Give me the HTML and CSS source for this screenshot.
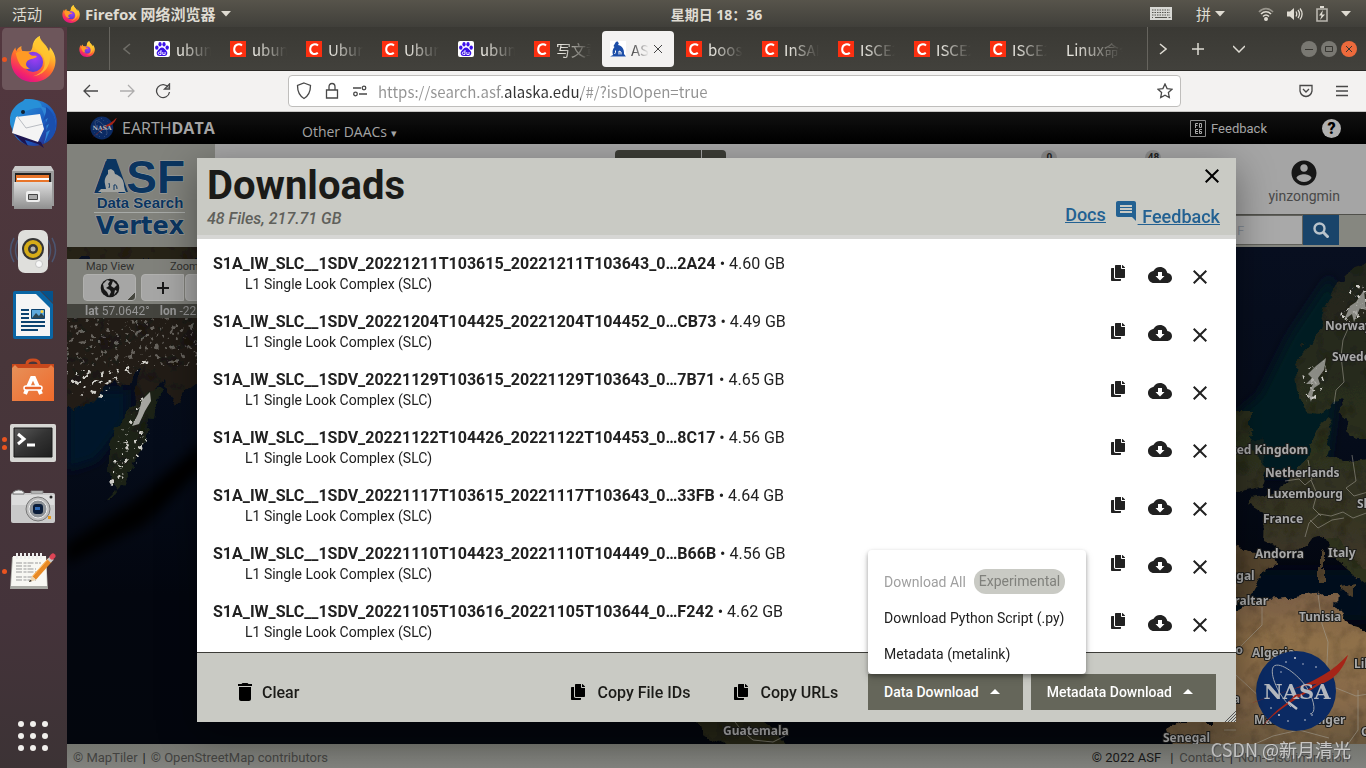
FILE: index.html
```html
<!DOCTYPE html>
<html lang="zh-CN">
<head>
<meta charset="utf-8">
<title>ASF Data Search Vertex</title>
<link rel="stylesheet" href="styles.css">
</head>
<body>
<svg class="defs" aria-hidden="true">
  <defs>
    <linearGradient id="ffg" x1="0.8" y1="0" x2="0.3" y2="1"><stop offset="0" stop-color="#fff44f"/><stop offset=".35" stop-color="#ffb62b"/><stop offset=".6" stop-color="#ff6a2d"/><stop offset=".85" stop-color="#f5256a"/><stop offset="1" stop-color="#d8128a"/></linearGradient>
    <radialGradient id="ffp" cx=".6" cy=".3" r=".8"><stop offset="0" stop-color="#a43df5"/><stop offset="1" stop-color="#4b3ccf"/></radialGradient>
    <linearGradient id="tbg" x1="0" y1="0" x2="1" y2="1"><stop offset="0" stop-color="#2f9fe0"/><stop offset=".6" stop-color="#1c5cc0"/><stop offset="1" stop-color="#2b1d78"/></linearGradient>
    <linearGradient id="metal" x1="0" y1="0" x2="0" y2="1"><stop offset="0" stop-color="#dedede"/><stop offset="1" stop-color="#8f8f8f"/></linearGradient>
    <linearGradient id="bag" x1="0" y1="0" x2="1" y2="1"><stop offset="0" stop-color="#e6915a"/><stop offset="1" stop-color="#f06a2b"/></linearGradient>
    <linearGradient id="screen" x1="0" y1="0" x2="1" y2="1"><stop offset="0" stop-color="#5a5a5a"/><stop offset=".5" stop-color="#333"/><stop offset="1" stop-color="#1d1d1d"/></linearGradient>
  </defs>
  <symbol id="firefox" viewBox="0 0 48 48">
    <path fill="url(#ffg)" d="M24 48C10 48 1 37.500 1 25.500c0-6 2-9.500 4.500-13.500l1 4c1-2.500 3-4.500 5.500-5.500-.5 2 0 4 1 5.500l8 0c3-3 2-4.500 3-8 1-3.500 4-6.500 7-8 0 4 2 6 5 9s3.500 4 4.500 7c1-1.500 1-3 1-4.500 3.500 4 6 9 6 14C47.500 39 37 48 24 48z"/>
    <circle cx="24" cy="27" r="10.500" fill="url(#ffp)"/>
    <path fill="#ff9a24" d="M6 18c4-4 12-3 16 2 2 1 5 0 6 1-1 3-7 2-10 5-3 4 0 7 3 8-6 2-12-2-15-16z"/>
    <path fill="#ffc52e" d="M31 0c0 6 9 8 10.500 20C43 31 35 41 24 42c9-3 13-8 12-16-1-9-9-11-11-15 0-4 2-8 6-11z" opacity=".8"/>
  </symbol>
  <symbol id="copy" viewBox="0 0 448 512"><path d="M320 448v40c0 13.255-10.745 24-24 24H24c-13.255 0-24-10.745-24-24V120c0-13.255 10.745-24 24-24h72v296c0 30.879 25.121 56 56 56h168zm0-344V0H152c-13.255 0-24 10.745-24 24v368c0 13.255 10.745 24 24 24h272c13.255 0 24-10.745 24-24V128H344c-13.200 0-24-10.800-24-24zm120.971-31.029L375.029 7.029A24 24 0 0 0 358.059 0H352v96h96v-6.059a24 24 0 0 0-7.029-16.970z"/></symbol>
  <symbol id="cloud" viewBox="0 0 24 24"><path d="M19.350 10.040C18.670 6.590 15.640 4 12 4 9.110 4 6.600 5.640 5.350 8.040 2.340 8.360 0 10.910 0 14c0 3.310 2.690 6 6 6h13c2.760 0 5-2.240 5-5 0-2.640-2.050-4.780-4.650-4.960zM16.500 13l-4.500 4.500-4.500-4.500h2.500V9h4v4h2.500z"/></symbol>
  <symbol id="close" viewBox="0 0 24 24"><path d="M19 6.410L17.590 5 12 10.590 6.410 5 5 6.410 10.590 12 5 17.590 6.410 19 12 13.410 17.590 19 19 17.590 13.410 12z"/></symbol>
  <symbol id="trash" viewBox="0 0 24 24"><path d="M6 19c0 1.100.9 2 2 2h8c1.100 0 2-.9 2-2V7H6v12zM19 4h-3.500l-1-1h-5l-1 1H5v2h14V4z"/></symbol>
  <symbol id="chat" viewBox="0 0 24 24"><path d="M21.990 4c0-1.100-.89-2-1.990-2H4c-1.100 0-2 .9-2 2v12c0 1.100.9 2 2 2h14l4 4-.010-18zM18 14H6v-2h12v2zm0-3H6V9h12v2zm0-3H6V6h12v2z"/></symbol>
  <symbol id="person" viewBox="0 0 24 24"><path d="M12 2C6.480 2 2 6.480 2 12s4.480 10 10 10 10-4.480 10-10S17.520 2 12 2zm0 3c1.660 0 3 1.340 3 3s-1.340 3-3 3-3-1.340-3-3 1.340-3 3-3zm0 14.200c-2.500 0-4.710-1.280-6-3.220.03-1.990 4-3.080 6-3.080 1.990 0 5.970 1.090 6 3.080-1.290 1.940-3.500 3.220-6 3.220z"/></symbol>
  <symbol id="caret" viewBox="0 0 10 6"><path d="M0 0h10L5 5.500z"/></symbol>
  <symbol id="up" viewBox="0 0 10 5"><path d="M0 5h10L5 0z"/></symbol>
  <symbol id="csdn" viewBox="0 0 16 16"><path fill="#fc2f10" d="M0 0h16v16H0z"/><path fill="none" stroke="#fff" stroke-width="2" d="M12 4.500C10 2.700 4.500 2.500 4.200 8s5 6 7.600 3.700"/></symbol>
  <symbol id="baidu" viewBox="0 0 16 16"><rect width="16" height="16" rx="2" fill="#fff"/><g fill="#3b10e8"><ellipse cx="2.800" cy="6.600" rx="1.700" ry="2.200"/><ellipse cx="6" cy="3.300" rx="1.600" ry="2.200"/><ellipse cx="10" cy="3.300" rx="1.600" ry="2.200"/><ellipse cx="13.200" cy="6.600" rx="1.700" ry="2.200"/><path d="M8 6.500c2 0 3 2 4.500 3.500s1 5-2 5H5.500c-3 0-3.500-3.500-2-5S6 6.500 8 6.500z"/></g><path fill="none" stroke="#fff" stroke-width=".9" d="M7 9v4.500H5.300c-1.300 0-1.300-2.500 0-2.500H7M8.800 11v2.500h2.300V11"/></symbol>
  <symbol id="asf" viewBox="0 0 16 16"><path fill="#fff" d="M0 0h16v16H0z"/><path fill="#1c4ea8" d="M3.500 5L6 .8 7.800.5l1 2L8 4c3 .5 6.500 3 6 9l2 2.500H0L3 14C2 11 2.500 8 4.500 6z"/><path stroke="#fff" fill="none" d="M5.500 9.500q.5 2-1 3.500M9 13.500v-3.500l2 1v2.500"/></symbol>
  <symbol id="nasa" viewBox="0 0 98 82">
    <circle cx="45" cy="41" r="40" fill="#0b2a63"/>
    <g fill="#cfd3dd"><circle cx="35" cy="12" r=".8"/><circle cx="44" cy="8" r="1"/><circle cx="52" cy="14" r=".7"/><circle cx="20" cy="58" r=".8"/><circle cx="28" cy="65" r="1"/><circle cx="37" cy="71" r=".8"/><circle cx="61" cy="65" r=".8"/><circle cx="65" cy="17" r=".8"/><circle cx="30" cy="22" r=".7"/><circle cx="54" cy="70" r=".8"/></g>
    <path fill="none" stroke="#9da4ae" d="M40 57C24 42 17 18 24 15.500c8-3 26 12 33 24 7 13 8 24 2 24.500"/>
    <path fill="#a62518" d="M0 53.500C24 43 68 37 97 5 93 17 85 28 73 33 50 35 24 45 0 53.500z"/>
    <path fill="#a62518" d="M97 5C82 37 38 45 11 77 30 50 62 40 78 24z"/>
    <path d="M37 52l9 7" stroke="#b9bdc4" stroke-width="2.500"/>
    <text x="46" y="49" text-anchor="middle" class="nasa-word">NASA</text>
    <path fill="#a62518" d="M44 45l6-1.500-13 8.500z"/>
  </symbol>
</svg>

<header class="topbar">
  <div class="topbar-side"><span>活动</span><span class="app-name"><svg width="18" height="18"><use href="#firefox"/></svg><b>Firefox 网络浏览器</b><svg class="light" width="10" height="6"><use href="#caret"/></svg></span></div>
  <b class="clock">星期日 18：36</b>
  <div class="topbar-side status">
    <svg width="22" height="14" viewBox="0 0 22 14"><path fill="#d8d8d4" d="M0 0h22v13H0z"/><path stroke="#55554f" stroke-dasharray="1.500 1" d="M2 3h18M2 5.500h18M2 8h18"/><path stroke="#55554f" d="M5 10.500h12M2 10.500h1M18.500 10.500h2"/></svg>
    <span class="ime">拼 <svg class="light" width="10" height="6"><use href="#caret"/></svg></span>
    <svg width="16" height="14" viewBox="0 0 16 14" fill="none" stroke="#dfdbd2" stroke-width="1.600"><path opacity=".5" d="M1 5c4-4.500 10-4.500 14 0"/><path d="M3 7c3-3 7-3 10 0M5 9.500c2-2 4-2 6 0"/><circle cx="8" cy="12" r="1.200" fill="#dfdbd2"/></svg>
    <svg width="16" height="14" viewBox="0 0 16 14"><path fill="#dfdbd2" d="M0 4.500h3L7 1v12L3 9.500H0z"/><path fill="none" stroke="#dfdbd2" stroke-width="1.300" d="M9 4.500q1.500 2.500 0 5M11 3q3 4 0 8M13 1.500q4.200 5.500 0 11"/></svg>
    <svg width="12" height="16" viewBox="0 0 12 16"><path fill="none" stroke="#b9b6af" stroke-width="1.600" d="M1 3h10v12H1z"/><path fill="#dfdbd2" d="M4 0h4v2H4zM7 4L3 9.500h2.500L4 14l5-5.500H6z"/></svg>
    <svg class="light" width="10" height="6"><use href="#caret"/></svg>
  </div>
</header>

<div class="desktop">
  <nav class="dock" aria-label="Dock">
    <button class="dock-item current" aria-label="Firefox"><i class="dots"></i><svg width="46" height="48"><use href="#firefox"/></svg></button>
    <button class="dock-item" aria-label="Thunderbird"><svg width="50" height="50" viewBox="0 0 50 50"><circle cx="26" cy="25" r="23" fill="url(#tbg)"/><path fill="#1d1550" d="M4 34l10 10 6 4-3-6 13 4 6 4-3-6z"/><path fill="#2790d8" d="M2 24C1 12 9 6 15 3l2-2 5 0c8 0 12 4 12 9-7-1-15 2-22 7-5 3-7 10-6 15-2-2-4-4-4-8z"/><path fill="#2f86d6" d="M32 8c12 3 17 12 16 22-2 8-8 13-12 15 4-11 4-24-4-37z"/><path fill="#1a4fae" d="M38 14l-3 9 5-3-4 9 5-3-4 9 5-3-6 14c8-4 12-11 12-18 0-9-4-15-10-19z"/><path fill="#f4f4f4" d="M8 19l24-3 4 15-6 13L4 35z"/><path fill="none" stroke="#b9bcc2" d="M9 18l9 12 17-4"/><circle cx="15" cy="14" r="2" fill="#123"/></svg></button>
    <button class="dock-item" aria-label="Files"><svg width="44" height="46" viewBox="0 0 44 46"><path fill="#c9c9c9" d="M4 2h36l3 5H1z"/><path fill="#9b9b9b" d="M1 7h42v35H1z"/><path fill="#222" d="M4 9h36v10H4z"/><path fill="#e8752a" d="M5 11h33v8H5z"/><path fill="#fff" d="M6 14h32v2H6z"/><path fill="url(#metal)" d="M3 18h38v27H3z"/><rect x="15" y="27" width="14" height="11" rx="2" fill="#eee"/><path fill="#aaa" stroke="#444" d="M17.500 30.500h9v5h-9z"/></svg></button>
    <button class="dock-item" aria-label="Rhythmbox"><svg width="48" height="46" viewBox="0 0 48 46"><g fill="none" stroke="#4b5570" stroke-width="1.500"><path d="M5 10q-7 12 0 24M9 12q-5 10 0 20M43 10q7 12 0 24M39 12q5 10 0 20"/></g><rect x="9" y="2" width="30" height="43" rx="7" fill="#dfdfdc"/><circle cx="24" cy="21" r="11" fill="#343434"/><circle cx="24" cy="21" r="9" fill="#d5ac18"/><circle cx="24" cy="21" r="5" fill="#373737"/><circle cx="24" cy="21" r="2.500" fill="#b5b5b0"/><circle cx="30" cy="36" r="3.500" fill="#f7f7f7" stroke="#c5c5c5"/></svg></button>
    <button class="dock-item" aria-label="LibreOffice Writer"><svg width="40" height="48" viewBox="0 0 40 48"><path fill="#0a66a5" d="M2 0h25l13 13v33q0 2-2 2H2q-2 0-2-2V2q0-2 2-2z"/><path fill="#f5f5f5" d="M3 3h20l14 14v28H3z"/><path fill="#06528a" d="M28 0h12v12z"/><path stroke="#0c4370" stroke-width="2" d="M8 19h8M8 23h8M8 27h8M8 31h24M8 35h24M8 39h17"/><path fill="#5fa9dc" stroke="#0c4370" d="M18.500 18.500h13v9h-13z"/><path fill="#2d4652" d="M19 27l4-5 3 3 2-3 3 3v2z"/><circle cx="29" cy="20.500" r="1.500" fill="#ffd23c"/></svg></button>
    <button class="dock-item" aria-label="Ubuntu Software"><svg width="42" height="44" viewBox="0 0 42 44"><path fill="none" stroke="#cf4d1f" stroke-width="3" d="M15 14V7q0-4 6-4t6 4v7"/><path fill="#c8481c" d="M0 7h42v8H0z"/><path fill="url(#bag)" d="M0 11l3-3 3 3h30l3-3 3 3v33H0z"/><path stroke="#fff" stroke-width="4" fill="none" d="M13 37l7-16h2l7 16"/><rect x="12" y="29" width="18" height="4" rx="2" fill="#e8652b" stroke="#fff" stroke-width="1.500"/></svg></button>
    <button class="dock-item" aria-label="Terminal"><i class="dots two"></i><svg width="46" height="38" viewBox="0 0 46 38"><rect width="46" height="38" rx="2" fill="#d6d6d3"/><path fill="url(#screen)" stroke="#181818" d="M4 4h38v29H4z"/><path fill="none" stroke="#fff" stroke-width="3" d="M8 10l6 5-6 5M17 21h8"/></svg></button>
    <button class="dock-item" aria-label="Camera"><svg width="44" height="36" viewBox="0 0 44 36"><rect y="4" width="44" height="30" rx="2" fill="#c9c9c9"/><path fill="#dcdcdc" d="M1 6h42v10H1z"/><path fill="#ececec" stroke="#777" d="M2 5V3q6-4 11 0v2zM20 2h12v2H20z"/><circle cx="27" cy="20" r="12" fill="#bdbdbd" stroke="#777"/><circle cx="27" cy="20" r="9" fill="#8c9196" stroke="#eee"/><rect x="22" y="15" width="10" height="10" rx="3" fill="#0a1c38"/><path fill="#2f69b4" d="M24 18h5v3h-5z"/><path fill="#e59a20" d="M37 27h3v3h-3z"/><circle cx="40" cy="8" r="1.500" fill="#222"/></svg></button>
    <button class="dock-item" aria-label="Text Editor"><i class="dots"></i><svg width="46" height="38" viewBox="0 0 46 38"><path fill="#a9aaa4" d="M2 5h34l2 32H0z"/><path fill="#f8f8f3" d="M3 4h33l1 30H1z"/><path fill="none" stroke="#eee" stroke-width="2" d="M7 7V1M11 7V1M15 7V1M19 7V1M23 7V1M27 7V1M31 7V1"/><path stroke="#999" stroke-dasharray="6 1.500 3 1" d="M6 11h25M6 14h15M6 17h20M6 20h20M6 25h22M6 28h20"/><path stroke="#e88a25" stroke-width="5" d="M24 26L40 8"/><path stroke="#ffc06a" d="M22 25L38 7"/><path stroke="#c9c9c9" stroke-width="5" d="M39 9l3-3"/><path stroke="#dd4455" stroke-width="5" stroke-linecap="round" d="M42 5l1-1"/><path fill="#edd5ae" d="M22 24l4 4-7 2z"/><path fill="#111" d="M20 28l2 1-3 1z"/></svg></button>
    <button class="dock-item apps" aria-label="显示应用程序"><svg width="32" height="32" viewBox="0 0 32 32" fill="#f1efec"><circle cx="4" cy="4" r="3"/><circle cx="16" cy="4" r="3"/><circle cx="28" cy="4" r="3"/><circle cx="4" cy="16" r="3"/><circle cx="16" cy="16" r="3"/><circle cx="28" cy="16" r="3"/><circle cx="4" cy="28" r="3"/><circle cx="16" cy="28" r="3"/><circle cx="28" cy="28" r="3"/></svg></button>
  </nav>

  <div class="browser">
    <div class="tabbar">
      <button class="pinned" aria-label="Firefox"><svg width="16" height="16"><use href="#firefox"/></svg></button>
      <button class="scroll dim" aria-label="向左滚动"><svg width="8" height="12" viewBox="0 0 8 12"><path d="M7 1L1 6l6 5"/></svg></button>
      <div class="tabs">
        <button class="tab"><svg width="16" height="16"><use href="#baidu"/></svg><span>ubuntu</span></button>
        <button class="tab"><svg width="16" height="16"><use href="#csdn"/></svg><span>ubuntu</span></button>
        <button class="tab"><svg width="16" height="16"><use href="#csdn"/></svg><span>Ubuntu</span></button>
        <button class="tab"><svg width="16" height="16"><use href="#csdn"/></svg><span>Ubuntu</span></button>
        <button class="tab"><svg width="16" height="16"><use href="#baidu"/></svg><span>ubuntu</span></button>
        <button class="tab"><svg width="16" height="16"><use href="#csdn"/></svg><span>写文章</span></button>
        <button class="tab active"><svg width="16" height="16"><use href="#asf"/></svg><span>ASF</span><svg class="tab-x" width="8" height="8" viewBox="0 0 8 8"><path d="M0 0l8 8M8 0L0 8"/></svg></button>
        <button class="tab"><svg width="16" height="16"><use href="#csdn"/></svg><span>boost</span></button>
        <button class="tab"><svg width="16" height="16"><use href="#csdn"/></svg><span>InSAR</span></button>
        <button class="tab"><svg width="16" height="16"><use href="#csdn"/></svg><span>ISCE2</span></button>
        <button class="tab"><svg width="16" height="16"><use href="#csdn"/></svg><span>ISCE2</span></button>
        <button class="tab"><svg width="16" height="16"><use href="#csdn"/></svg><span>ISCE2</span></button>
        <button class="tab"><span>Linux命令</span></button>
      </div>
      <div class="tab-tools">
        <button aria-label="向右滚动"><svg width="8" height="12" viewBox="0 0 8 12"><path d="M1 1l6 5-6 5"/></svg></button>
        <button aria-label="新标签页"><svg width="12" height="12" viewBox="0 0 12 12"><path d="M6 0v12M0 6h12"/></svg></button>
        <button aria-label="列出标签页"><svg width="12" height="8" viewBox="0 0 12 8"><path d="M0 1l6 6 6-6"/></svg></button>
      </div>
      <div class="window-buttons">
        <button aria-label="最小化"><svg width="8" height="8" viewBox="0 0 8 8"><path d="M0 4.500h8"/></svg></button>
        <button aria-label="最大化"><svg width="8" height="8" viewBox="0 0 8 8"><path d="M.5 1.500h7v5h-7z"/></svg></button>
        <button class="quit" aria-label="关闭"><svg width="8" height="8" viewBox="0 0 8 8"><path d="M1 1l6 6M7 1L1 7"/></svg></button>
      </div>
    </div>

    <div class="toolbar">
      <div class="nav-buttons">
        <button aria-label="后退"><svg width="16" height="14" viewBox="0 0 16 14"><path d="M15 7H1.500M7 1L1 7l6 6"/></svg></button>
        <button class="off" aria-label="前进"><svg width="16" height="14" viewBox="0 0 16 14"><path d="M1 7h13.500M9 1l6 6-6 6"/></svg></button>
        <button aria-label="刷新"><svg width="16" height="16" viewBox="0 0 16 16"><path d="M13.500 4.500A6.500 6.500 0 1 0 14.500 9M14.500 1v5h-5z"/></svg></button>
      </div>
      <div class="urlbox">
        <svg width="16" height="18" viewBox="0 0 16 18"><path d="M8 1l6.500 2.500C14.500 10 13 13.500 8 16.500 3 13.500 1.500 10 1.500 3.500z"/></svg>
        <svg width="14" height="18" viewBox="0 0 14 18"><path d="M1.500 8h11v8h-11zM4 8V5q0-3.500 3-3.500T10 5v3"/></svg>
        <svg width="16" height="12" viewBox="0 0 16 12"><path d="M1 3h8M7 9h8"/><circle cx="12" cy="3" r="1.800"/><circle cx="3.500" cy="9" r="1.800"/></svg>
        <input class="url" type="text" aria-label="网址" value="https://search.asf.alaska.edu/#/?isDlOpen=true">
        <svg width="16" height="16" viewBox="0 0 16 16"><path d="M8 1l2.100 4.600 4.900.6-3.600 3.400.9 5L8 12.200l-4.300 2.400.9-5L1 6.200l4.900-.6z"/></svg>
      </div>
      <div class="nav-end">
        <button aria-label="Pocket"><svg width="14" height="14" viewBox="0 0 14 14"><path d="M1 1.500h12V7q-1 5-6 5.500Q2 12 1 7zM4 5l3 3 3-3"/></svg></button>
        <button aria-label="菜单"><svg width="12" height="12" viewBox="0 0 12 12"><path d="M0 1.500h12M0 6h12M0 10.500h12"/></svg></button>
      </div>
    </div>

    <div class="page">
      <div class="earthdata">
        <a class="brand" href="#"><svg width="28" height="24"><use href="#nasa"/></svg><span>EARTH<b>DATA</b></span></a>
        <a class="daacs" href="#">Other DAACs <small>▾</small></a>
        <a class="ed-feedback" href="#"><svg width="16" height="17" viewBox="0 0 16 17" fill="none" stroke="#8b8b8b"><path d="M.5.5h15v16H.5z"/><path stroke="#aaa" d="M8 3.500H5.500V8M5.500 5.500H7.500M9.500 3.500h2v4h-2zM8 9.500H5.500v4H8M5.500 11.500H8M12 9.500H9.500v4h2v-2h-2"/></svg>Feedback</a>
        <button class="help" aria-label="Help">?</button>
      </div>
      <div class="asf-header">
        <a class="vertex" href="#" aria-label="ASF Data Search Vertex">
          <svg width="100" height="86" viewBox="0 0 100 86">
            <g class="logo-text"><text x="3" y="39" class="l-asf">ASF</text><text x="50" y="54" class="l-data" text-anchor="middle">Data Search</text><text x="50" y="80" class="l-vertex" text-anchor="middle">Vertex</text></g>
            <path stroke="#a8aba8" d="M4 58.500h91"/>
            <path fill="#0b3560" d="M5 38L17 5h9l12 33z"/>
            <path fill="#a2a4a1" d="M8 38l3-3h5l-1-5c-1-5 1-8 3-10l0-4 3-1 3 2 1 3c6 2 9 6 9 12l1 4 1 2z"/>
            <path fill="none" stroke="#0b3560" d="M19 34q1-2 0-5M24 36v-5q3-1 3 4"/>
          </svg>
        </a>
        <div class="asf-main">
          <div class="asf-row">
            <div class="search-split"><i></i><i></i></div>
            <div class="badges"><b>0</b><b>48</b></div>
            <a class="user" href="#"><svg width="30" height="30"><use href="#person"/></svg>yinzongmin</a>
          </div>
          <div class="asf-sub"><input type="text" aria-label="Search" placeholder="F"><button aria-label="Search"><svg width="16" height="16" viewBox="0 0 16 16" fill="none" stroke="#b9c3cb" stroke-width="2.400"><circle cx="6.500" cy="6.500" r="5"/><path stroke-width="3" d="M10.500 10.500l5 5"/></svg></button></div>
        </div>
      </div>

      <div class="map">
        <svg class="earth" viewBox="67 247 1299 497" preserveAspectRatio="xMidYMid slice">
          <defs>
            <filter id="snow" x="0" y="0" width="1" height="1"><feTurbulence type="fractalNoise" baseFrequency=".2" numOctaves="3" seed="4"/><feColorMatrix values="0 0 0 0 .62 0 0 0 0 .61 0 0 0 0 .57 12 0 0 0 -7.400"/><feComposite in2="SourceAlpha" operator="in"/></filter>
            <filter id="rough" x="0" y="0" width="1" height="1"><feTurbulence type="fractalNoise" baseFrequency=".06" numOctaves="5" seed="9" result="n"/><feDisplacementMap in="SourceGraphic" in2="n" scale="14" xChannelSelector="R" yChannelSelector="G" result="d"/><feColorMatrix in="n" values="0 0 0 0 0 0 0 0 0 0 0 0 0 0 0 3 0 0 0 -1.300" result="s"/><feComposite in="s" in2="d" operator="in" result="t"/><feComponentTransfer in="t" result="u"><feFuncA type="linear" slope=".28"/></feComponentTransfer><feMerge><feMergeNode in="d"/><feMergeNode in="u"/></feMerge></filter>
            <filter id="soft" x="-.2" y="-.2" width="1.400" height="1.400"><feGaussianBlur stdDeviation="6"/></filter>
            <linearGradient id="africa" x1="0" y1="0" x2="0" y2="1"><stop offset="0" stop-color="#7a5f45"/><stop offset=".3" stop-color="#8f7048"/><stop offset=".65" stop-color="#876a4a"/><stop offset="1" stop-color="#5f5038"/></linearGradient>
            <linearGradient id="europe" x1="0" y1="0" x2="0" y2="1"><stop offset="0" stop-color="#23251a"/><stop offset=".55" stop-color="#2a2f1d"/><stop offset="1" stop-color="#3f3828"/></linearGradient>
            <linearGradient id="sea" x1="0" y1="0" x2="0" y2="1"><stop offset="0" stop-color="#080f20"/><stop offset=".4" stop-color="#050c1a"/><stop offset=".7" stop-color="#03060f"/><stop offset="1" stop-color="#03060d"/></linearGradient>
          </defs>
          <path fill="url(#sea)" d="M67 247h1299v497H67z"/>
          <g filter="url(#soft)"><path fill="#06182a" d="M67 390h60v30l-30 40-30 10z"/><path fill="#061a24" d="M1330 275l-40 60-30 60-24 20v60h90l20-150z"/><path fill="#000206" d="M205 440l-70 60-70 45v20l80-40 60-60z"/><path fill="#05101d" d="M1236 570h130v50h-130z"/></g>
          <g filter="url(#rough)">
            <path fill="#262216" d="M50 240h160v20H50z"/>
            <path fill="#211f17" d="M50 300h165v80l-20 4-12 10-8 10-8-14-2-10-8 8-12 12-8 2 4-30-10 9-10 7-7-8-13 8-5 12-9 9-64-9z"/>
            <path fill="#1a2418" d="M165 389l-17 3-28 26-11 24v26l6 25-10 6 18-18 20-29 6-24 4-20z"/>
            <path fill="url(#europe)" d="M1385 258l-30 10-18 18-10 20-6 24-20 22-5 18 2 26 10 15 12 2 12-7 8-6 8 34 8 8h40zM1318 427l10-7 3 14-5 22 20 4 36-8v126l-26 0-14-22-22-18-16 5-12 12-14-6-16-7 1-28-16-11 6-6 14-3 22-12 10-16 6-10zM1220 412h32v16l-4 8 12 26 8 8-6 18-25 5h-17z"/>
            <path fill="#1e231c" d="M1260 436l5 18-3 12-12-22z" opacity=".6"/>
            <path fill="#54452f" d="M1220 543l54 15 2 8-14 8-14 24-28 14zM1320 552l4 2v12l-4 2zM1319 566h7v14h-7zM1342 588l14-3v12l-14-5z"/>
            <path fill="#2f311d" d="M1325 542l14-4 22 28 14 12v12l-22-16-16-14z"/>
            <path fill="url(#africa)" d="M1210 617l32-8 12-8 32-4 38-4 14 0-1 16 6 12 20 6 8 10 18 0v120h-205l-14-12-3-18 12-7h31z"/>
            <path fill="#252819" d="M680 712h64l30 20 14 16h-55l-24-14z"/>
          </g>
          <g filter="url(#snow)"><path d="M67 370h35l28-12 20 4-14 10-23 14-9 15-37-9zM148 395l-6 22-12 20-7 1 11-30 9-14zM120 430l22-10 8 14-10 25-20 24-13 8z"/><path d="M67 318h130v48H67z" opacity=".4"/></g>
          <g filter="url(#snow)"><path d="M1353 285h13v30l-22 12-8-12zM1302 372l22-12 3 12-8 26-12 4z"/></g>
          <g fill="#a5a5a0"><path d="M150 392l-8 8-4 14-6 12 7-2 6-13 6-10z"/><path d="M1364 290l-8 12-6 4-6 14 8-6 2 8 6-14 6 2zM1326 358l-10 8-8 8 4 4-6 6 7 0-5 10 3 8 3-14 6-4-2-6 6-8z" opacity=".8"/></g>
          <g class="borders"><path d="M1351 322l-8 18-2 16 3 26-8 8-2 14M1285 481l14-2 6 6 6-5 6 14-4 14 8 8M1308 460l4 20M1352 455l4 26-10 7 8 8 14-4M1305 537l4-14 10-9 12 2 12-4 10 6 16-6M1310 520l8 8 14-8 12-2M1262 607v18l-22 22-4 2M1318 594l4 30 6 18-2 42 30 12 12-2M1236 675l26 24M1358 690v40l-10 14M1236 730h-12M1255 744l18-8 26-6 30 8"/><path d="M735 722l8 10 10 8 20 2 12-6"/></g>
          <g class="labels">
            <text x="1325" y="330">Norway</text><text x="1332" y="361">Sweden</text><text x="1211" y="454">United Kingdom</text><text x="1265" y="477">Netherlands</text><text x="1267" y="498">Luxembourg</text><text x="1263" y="523">France</text><text x="1255" y="558">Andorra</text><text x="1328" y="557">Italy</text><text x="1203" y="580">Portugal</text><text x="1268" y="605" text-anchor="end">Gibraltar</text><text x="1299" y="621">Tunisia</text><text x="1243" y="654" text-anchor="end">Morocco</text><text x="1252" y="657">Algeria</text><text x="1354" y="668">Libya</text><text x="1240" y="703" text-anchor="end">Mauritania</text><text x="1254" y="724">Mali</text><text x="1312" y="724">Niger</text><text x="1361" y="736">Chad</text><text x="1163" y="742">Senegal</text><text x="723" y="735">Guatemala</text><text x="1357" y="508">Slovakia</text>
          </g>
        </svg>
        <div class="map-tools">
          <div class="tool-group"><span>Map View</span><button class="tool corner" aria-label="Map View"><svg width="20" height="20" viewBox="0 0 20 20"><circle cx="10" cy="10" r="9.300" fill="#171717"/><path fill="#a8a8a8" d="M3 6l4-4 3 1-2 3 1 2-3 2 4 2 1 2-2 4-2-4-3-3zM13 3l4 4-3 3-3-2zM15 12l2 1-3 4z"/></svg></button></div>
          <div class="tool-group"><span class="zoom-label">Zoom</span><div class="zoom"><button class="tool" aria-label="Zoom in"><svg width="12" height="12" viewBox="0 0 12 12"><path stroke="#181818" stroke-width="2" d="M6 0v12M0 6h12"/></svg></button><button class="tool" aria-label="Zoom out"></button></div></div>
        </div>
        <div class="coords"><b>lat</b> 57.0642° <b class="lon">lon</b> -22.1406°</div>
        <svg class="nasa-badge" width="98" height="82"><use href="#nasa"/></svg>
      </div>

      <footer class="footer">
        <div><a href="#">© MapTiler</a><i>|</i><a href="#">© OpenStreetMap contributors</a></div>
        <div><span>© 2022 ASF</span><i class="wide">|</i><a href="#">Contact</a><i>|</i><a href="#">Non-Discrimination</a></div>
        <span class="watermark">CSDN @新月清光</span>
      </footer>

      <div class="overlay">
        <section class="dialog" role="dialog" aria-label="Downloads">
          <header class="dialog-head">
            <div class="title"><h1>Downloads</h1><p>48 Files, 217.71 GB</p></div>
            <div class="head-side">
              <button class="icon" aria-label="Close"><svg width="24" height="24"><use href="#close"/></svg></button>
              <div class="links"><a href="#">Docs</a><a class="fb" href="#"><svg width="24" height="24"><use href="#chat"/></svg>&nbsp;Feedback</a></div>
            </div>
          </header>
          <ul class="files">
            <li><div><p><b>S1A_IW_SLC__1SDV_20221211T103615_20221211T103643_0…2A24</b> • 4.60 GB</p><small>L1 Single Look Complex (SLC)</small></div><div class="actions"><button aria-label="Copy"><svg class="cp" width="14" height="16"><use href="#copy"/></svg></button><button aria-label="Download"><svg class="cd" width="24" height="24"><use href="#cloud"/></svg></button><button aria-label="Remove"><svg width="24" height="24"><use href="#close"/></svg></button></div></li>
            <li><div><p><b>S1A_IW_SLC__1SDV_20221204T104425_20221204T104452_0…CB73</b> • 4.49 GB</p><small>L1 Single Look Complex (SLC)</small></div><div class="actions"><button aria-label="Copy"><svg class="cp" width="14" height="16"><use href="#copy"/></svg></button><button aria-label="Download"><svg class="cd" width="24" height="24"><use href="#cloud"/></svg></button><button aria-label="Remove"><svg width="24" height="24"><use href="#close"/></svg></button></div></li>
            <li><div><p><b>S1A_IW_SLC__1SDV_20221129T103615_20221129T103643_0…7B71</b> • 4.65 GB</p><small>L1 Single Look Complex (SLC)</small></div><div class="actions"><button aria-label="Copy"><svg class="cp" width="14" height="16"><use href="#copy"/></svg></button><button aria-label="Download"><svg class="cd" width="24" height="24"><use href="#cloud"/></svg></button><button aria-label="Remove"><svg width="24" height="24"><use href="#close"/></svg></button></div></li>
            <li><div><p><b>S1A_IW_SLC__1SDV_20221122T104426_20221122T104453_0…8C17</b> • 4.56 GB</p><small>L1 Single Look Complex (SLC)</small></div><div class="actions"><button aria-label="Copy"><svg class="cp" width="14" height="16"><use href="#copy"/></svg></button><button aria-label="Download"><svg class="cd" width="24" height="24"><use href="#cloud"/></svg></button><button aria-label="Remove"><svg width="24" height="24"><use href="#close"/></svg></button></div></li>
            <li><div><p><b>S1A_IW_SLC__1SDV_20221117T103615_20221117T103643_0…33FB</b> • 4.64 GB</p><small>L1 Single Look Complex (SLC)</small></div><div class="actions"><button aria-label="Copy"><svg class="cp" width="14" height="16"><use href="#copy"/></svg></button><button aria-label="Download"><svg class="cd" width="24" height="24"><use href="#cloud"/></svg></button><button aria-label="Remove"><svg width="24" height="24"><use href="#close"/></svg></button></div></li>
            <li><div><p><b>S1A_IW_SLC__1SDV_20221110T104423_20221110T104449_0…B66B</b> • 4.56 GB</p><small>L1 Single Look Complex (SLC)</small></div><div class="actions"><button aria-label="Copy"><svg class="cp" width="14" height="16"><use href="#copy"/></svg></button><button aria-label="Download"><svg class="cd" width="24" height="24"><use href="#cloud"/></svg></button><button aria-label="Remove"><svg width="24" height="24"><use href="#close"/></svg></button></div></li>
            <li><div><p><b>S1A_IW_SLC__1SDV_20221105T103616_20221105T103644_0…F242</b> • 4.62 GB</p><small>L1 Single Look Complex (SLC)</small></div><div class="actions"><button aria-label="Copy"><svg class="cp" width="14" height="16"><use href="#copy"/></svg></button><button aria-label="Download"><svg class="cd" width="24" height="24"><use href="#cloud"/></svg></button><button aria-label="Remove"><svg width="24" height="24"><use href="#close"/></svg></button></div></li>
          </ul>
          <footer class="dialog-foot">
            <button class="text-btn clear"><svg width="24" height="24"><use href="#trash"/></svg>Clear</button>
            <button class="text-btn"><svg width="14" height="16"><use href="#copy"/></svg>Copy File IDs</button>
            <button class="text-btn"><svg width="14" height="16"><use href="#copy"/></svg>Copy URLs</button>
            <div class="menu-anchor">
              <button class="solid">Data Download<svg width="10" height="5"><use href="#up"/></svg></button>
              <div class="menu" role="menu">
                <button role="menuitem" disabled>Download All<span class="pill">Experimental</span></button>
                <button role="menuitem">Download Python Script (.py)</button>
                <button role="menuitem">Metadata (metalink)</button>
              </div>
            </div>
            <button class="solid">Metadata Download<svg width="10" height="5"><use href="#up"/></svg></button>
            <svg class="grip" width="11" height="11" viewBox="0 0 11 11"><path d="M0 11L11 0M3 11l8-8M6 11l5-5M9 11l2-2"/></svg>
          </footer>
        </section>
      </div>
    </div>
  </div>
</div>
</body>
</html>
```

FILE: styles.css
```css
* { box-sizing: border-box; }
body {
  margin: 0;
  height: 100vh;
  display: flex;
  flex-direction: column;
  overflow: hidden;
  font-family: Roboto, "Noto Sans CJK SC", sans-serif;
  background: #000;
}
button, input { font: inherit; color: inherit; border: 0; padding: 0; margin: 0; background: none; }
button { cursor: pointer; display: flex; align-items: center; }
a { color: inherit; text-decoration: none; }
svg { display: block; flex: none; }
i { font-style: normal; }
.defs { position: absolute; width: 0; height: 0; }
.nasa-word { font: bold 21px "DejaVu Serif", serif; fill: #b4b8bf; }

/* system bar */
.topbar {
  height: 27px;
  flex: none;
  display: flex;
  align-items: center;
  background: linear-gradient(#57544b, #403f3a);
  color: #dfdbd2;
  font: 15px "Noto Sans", "Noto Sans CJK SC", sans-serif;
  padding: 0 15px 0 12px;
}
.topbar-side { flex: 1; display: flex; align-items: center; gap: 20px; white-space: nowrap; }
.app-name { display: flex; align-items: center; gap: 5px; }
.clock { margin-left: 70px; white-space: nowrap; font-size: 14px; }
.light { fill: #dfdbd2; }
.status { justify-content: flex-end; gap: 13px; }
.ime { display: flex; align-items: center; gap: 4px; margin: 0 20px 0 11px; }

.desktop { flex: 1; min-height: 0; display: flex; }

/* dock */
.dock {
  width: 67px;
  flex: none;
  display: flex;
  flex-direction: column;
  background: linear-gradient(#53373f, #48363a 45%, #44333a 80%, #3c3335);
}
.dock-item { height: 64px; width: 66px; justify-content: center; position: relative; }
.current { background: #6d565b; background-clip: content-box; padding: 1px 2px; border-radius: 6px; }
.apps { margin-top: auto; }
.dots { position: absolute; left: 2px; width: 5px; height: 5px; border-radius: 50%; background: #e95420; }
.two { margin-top: -8px; box-shadow: 0 8px #e95420; }

/* browser chrome */
.browser { flex: 1; min-width: 0; display: flex; flex-direction: column; }
.tabbar {
  height: 44px;
  flex: none;
  display: flex;
  align-items: center;
  background: linear-gradient(#3a3934, #42413c);
  border-bottom: 1px solid #2b2a27;
  color: #e6e4dd;
  font: 15px "Noto Sans CJK SC", sans-serif;
}
.tabbar path, .toolbar path, .toolbar circle { stroke-width: 1.500; }
.scroll path, .tab-tools path { fill: none; stroke: #dedbd3; }
.pinned { width: 43px; height: 43px; padding-left: 12px; border-right: 1px solid #66645e; }
.scroll { width: 34px; justify-content: center; }
.dim { opacity: .3; }
.tabs { flex: 1; min-width: 0; display: flex; overflow: hidden; }
.tab { width: 76px; height: 36px; flex: none; padding: 2px 9px 0 10px; gap: 6px; }
.tab svg { margin-bottom: 2px; }
.tab span {
  flex: 1;
  overflow: hidden;
  white-space: nowrap;
  text-align: left;
  -webkit-mask-image: linear-gradient(90deg, #000 15%, transparent);
  mask-image: linear-gradient(90deg, #000 15%, transparent);
}
.active { width: 72px; margin: 0 2px; padding: 2px 12px 0 8px; background: #f3f2f1; color: #555; border-radius: 4px; gap: 5px; }
.tab-x path { stroke: #444; stroke-width: 1; }
.tab-tools { height: 43px; display: flex; border-left: 1px solid #66645e; }
.tab-tools button { width: 40px; justify-content: center; }
.tab-tools button:first-child { width: 30px; }
.tab-tools button:nth-child(3) { width: 42px; }
.window-buttons { display: flex; gap: 4px; padding: 0 9px 0 41px; }
.window-buttons button { width: 16px; height: 16px; border-radius: 50%; justify-content: center; background: #797872; }
.window-buttons path { fill: none; stroke: #383732; stroke-width: 1; }
.window-buttons .quit { background: #ed6a3c; }

.toolbar {
  height: 41px;
  flex: none;
  display: flex;
  align-items: center;
  background: #f3f2f1;
  border-bottom: 1px solid #c6c5c3;
}
.toolbar path, .toolbar circle { fill: none; stroke: #484848; stroke-width: 1.300; }
.nav-buttons { width: 221px; display: flex; gap: 20px; padding-left: 16px; }
.off { opacity: .4; }
.urlbox {
  flex: 1;
  height: 32px;
  display: flex;
  align-items: center;
  gap: 13px;
  padding: 0 7px;
  background: #fff;
  border: 1px solid #bfbebc;
  border-radius: 4px;
}
.url {
  flex: 1;
  min-width: 0;
  margin-left: -3px;
  font: 15px "Noto Sans CJK SC", sans-serif;
  color: transparent;
  background: linear-gradient(90deg, #929292 127px, #333 127px, #333 203px, #929292 203px);
  -webkit-background-clip: text;
  background-clip: text;
}
.nav-end { width: 185px; display: flex; justify-content: flex-end; gap: 23px; padding-right: 18px; }

/* site */
.page { flex: 1; min-height: 0; position: relative; display: flex; flex-direction: column; }
.earthdata {
  height: 32px;
  flex: none;
  display: flex;
  align-items: center;
  padding: 0 25px 0 22px;
  background: linear-gradient(#111, #000);
  color: #a5a5a5;
}
.brand { width: 213px; display: flex; align-items: center; gap: 5px; font: 16px "Open Sans", sans-serif; }
.daacs { flex: 1; padding-top: 6px; font: 14px "Open Sans", sans-serif; }
.daacs small { font-size: 11px; }
.ed-feedback { display: flex; align-items: center; gap: 5px; font-size: 13px; margin-right: 55px; }
.help { width: 19px; height: 19px; justify-content: center; border-radius: 50%; background: #b0b0b0; color: #000; font-weight: 900; font-size: 16px; }
.asf-header { height: 103px; flex: none; display: flex; background: #a5a5a5; }
.vertex { width: 148px; padding: 10px 0 0 23px; background: #81827c; }
.logo-text text { fill: #0b3560; stroke: #a2a5a4; stroke-width: 1; paint-order: stroke; }
.l-asf { font: bold 46px "Liberation Sans", sans-serif; }
.l-data { font: bold 15px "Liberation Sans", sans-serif; }
.l-vertex { font: bold 24px "DejaVu Sans", sans-serif; }
.asf-main { flex: 1; display: flex; flex-direction: column; }
.asf-row { height: 70px; display: flex; align-items: flex-start; padding: 6px 26px 0 400px; }
.search-split { display: flex; gap: 1px; }
.search-split i { width: 86px; height: 36px; background: #3c3d36; border-radius: 4px 0 0 4px; }
.search-split i + i { width: 24px; border-radius: 0 4px 4px 0; }
.badges { flex: 1; display: flex; justify-content: flex-end; gap: 88px; font-size: 10px; color: #222; padding-right: 107px; }
.badges b { width: 16px; height: 16px; line-height: 16px; text-align: center; border-radius: 8px; background: #8b8b8b; }
.user { display: flex; flex-direction: column; align-items: center; padding-top: 8px; font-size: 14px; line-height: 16px; color: #494949; }
.user svg { fill: #171717; }
.asf-sub { flex: 1; display: flex; justify-content: flex-end; padding: 0 27px 2px; background: #868780; border-top: 1px solid #50504b; }
.asf-sub input { width: 71px; padding-left: 4px; background: #a9a9a9; border: 1px solid #61615c; font-size: 13px; }
.asf-sub input::placeholder { color: #848b93; }
.asf-sub button { width: 36px; justify-content: center; background: #19446a; }

.map { flex: 1; min-height: 0; position: relative; overflow: hidden; padding-top: 12px; }
.earth { position: absolute; inset: 0; width: 100%; height: 100%; }
.borders { fill: none; stroke: #a3a095; stroke-width: .8; opacity: .7; }
.labels { font: bold 12px "Noto Sans", sans-serif; fill: #a9a9a9; stroke: #1d1d1b; stroke-width: 2px; paint-order: stroke; }
.map-tools { position: relative; height: 45px; width: 400px; display: flex; gap: 5px; padding: 0 16px; background: #80817b; font-size: 11px; color: #30302e; }
.tool-group { display: flex; flex-direction: column; line-height: 15px; }
.tool-group > span { padding-left: 3px; }
.tool-group .zoom-label { padding-left: 29px; }
.zoom { display: flex; gap: 1px; }
.tool { width: 53px; height: 27px; justify-content: center; background: #a6a6a5; border: 1px solid #b0b0ae; border-radius: 4px; }
.zoom .tool { width: 43px; border-radius: 4px 0 0 4px; }
.corner { background: linear-gradient(135deg, #a6a6a5 90%, #45463e 90%); }
.coords { position: relative; width: 400px; height: 14px; padding-left: 18px; font-size: 12px; line-height: 14px; color: #969696; background: rgba(72, 73, 66, .9); white-space: nowrap; }
.coords .lon { margin-left: 7px; }
.nasa-badge { position: absolute; right: 17px; bottom: 12px; }

.footer { position: relative; height: 24px; flex: none; display: flex; justify-content: space-between; align-items: center; padding: 3px 17px 0 6px; font-size: 13px; color: #424240; background: linear-gradient(#74756f, #81827e); }
.footer i { margin: 0 5px; color: #222; }
.footer .wide { margin: 0 6px 0 9px; }
.footer span { color: #181818; }
.footer .watermark { position: absolute; right: 15px; bottom: 5px; font: 18px "Noto Sans CJK SC", sans-serif; line-height: 28px; color: rgba(225, 225, 225, .8); text-shadow: 1px 1px 1px #555; }

/* downloads dialog */
.overlay { position: absolute; inset: 0; padding: 46px 130px; display: flex; }
.dialog { flex: 1; min-width: 0; display: flex; flex-direction: column; background: #fff; color: #1b1b18; box-shadow: 0 11px 36px rgba(0, 0, 0, .4); }
.dialog-head { height: 81px; flex: none; display: flex; justify-content: space-between; padding: 4px 12px 0 10px; background: #c9cac4; border-bottom: 4px solid #d6d6d4; }
.title { padding-top: 1px; }
h1 { margin: 0; font-size: 40px; line-height: 46px; font-weight: 700; }
.dialog p { margin: 0; }
.dialog-head p { font-size: 16px; line-height: 20px; font-weight: 500; font-style: italic; color: #5f605b; }
.head-side { display: flex; flex-direction: column; align-items: flex-end; }
.icon { width: 24px; height: 28px; }
.links { display: flex; align-items: flex-start; gap: 8px; padding: 10px 4px 0 0; font-size: 18px; line-height: 32px; font-weight: 500; color: #236192; text-decoration: underline; }
.links a { text-decoration: underline; }
.links svg { fill: #236192; }
.fb { display: flex; line-height: 36px; }
.files { flex: 1; min-height: 0; overflow: hidden; list-style: none; margin: 0; padding: 8px 16px 0; color: #212121; }
.files li { height: 58px; display: flex; justify-content: space-between; padding-top: 7px; }
.files p { font-size: 16px; line-height: 20px; }
.files small { display: block; padding-left: 32px; font-size: 14px; line-height: 20px; }
.actions { display: flex; height: 46px; fill: #212121; }
.actions button { width: 40px; justify-content: center; }
.cp { margin: 0 4px 8px 0; }
.cd { margin-bottom: 4px; }
.dialog-foot { position: relative; height: 70px; flex: none; display: flex; align-items: center; gap: 8px; padding: 8px 20px 0 36px; background: #c9cac4; border-top: 1px solid #3c3c38; }
.text-btn { height: 36px; gap: 12px; padding-top: 1px; font-size: 16px; font-weight: 500; margin-right: 22px; }
.text-btn + .text-btn { margin-left: 14px; }
.clear { gap: 5px; margin-right: auto; }
.solid { height: 36px; gap: 11px; padding: 0 23px 0 16px; background: #65665a; color: #fff; fill: #fff; font-size: 14px; font-weight: 500; }
.menu-anchor { position: relative; }
.menu { position: absolute; left: 0; bottom: 100%; width: 218px; padding: 14px 0 2px; background: #fff; border-radius: 4px; box-shadow: 0 2px 4px rgba(0, 0, 0, .3), 0 4px 8px rgba(0, 0, 0, .15); font-size: 14px; color: #212121; }
.menu button { width: 100%; height: 36px; padding: 0 16px; white-space: nowrap; }
.menu button:disabled { color: #a0a0a0; }
.pill { margin-left: 8px; padding: 0 5px; line-height: 25px; border-radius: 12px; background: #c9cac4; color: #80817c; }
.grip { position: absolute; right: 0; bottom: 0; fill: none; stroke: #555; }
```
